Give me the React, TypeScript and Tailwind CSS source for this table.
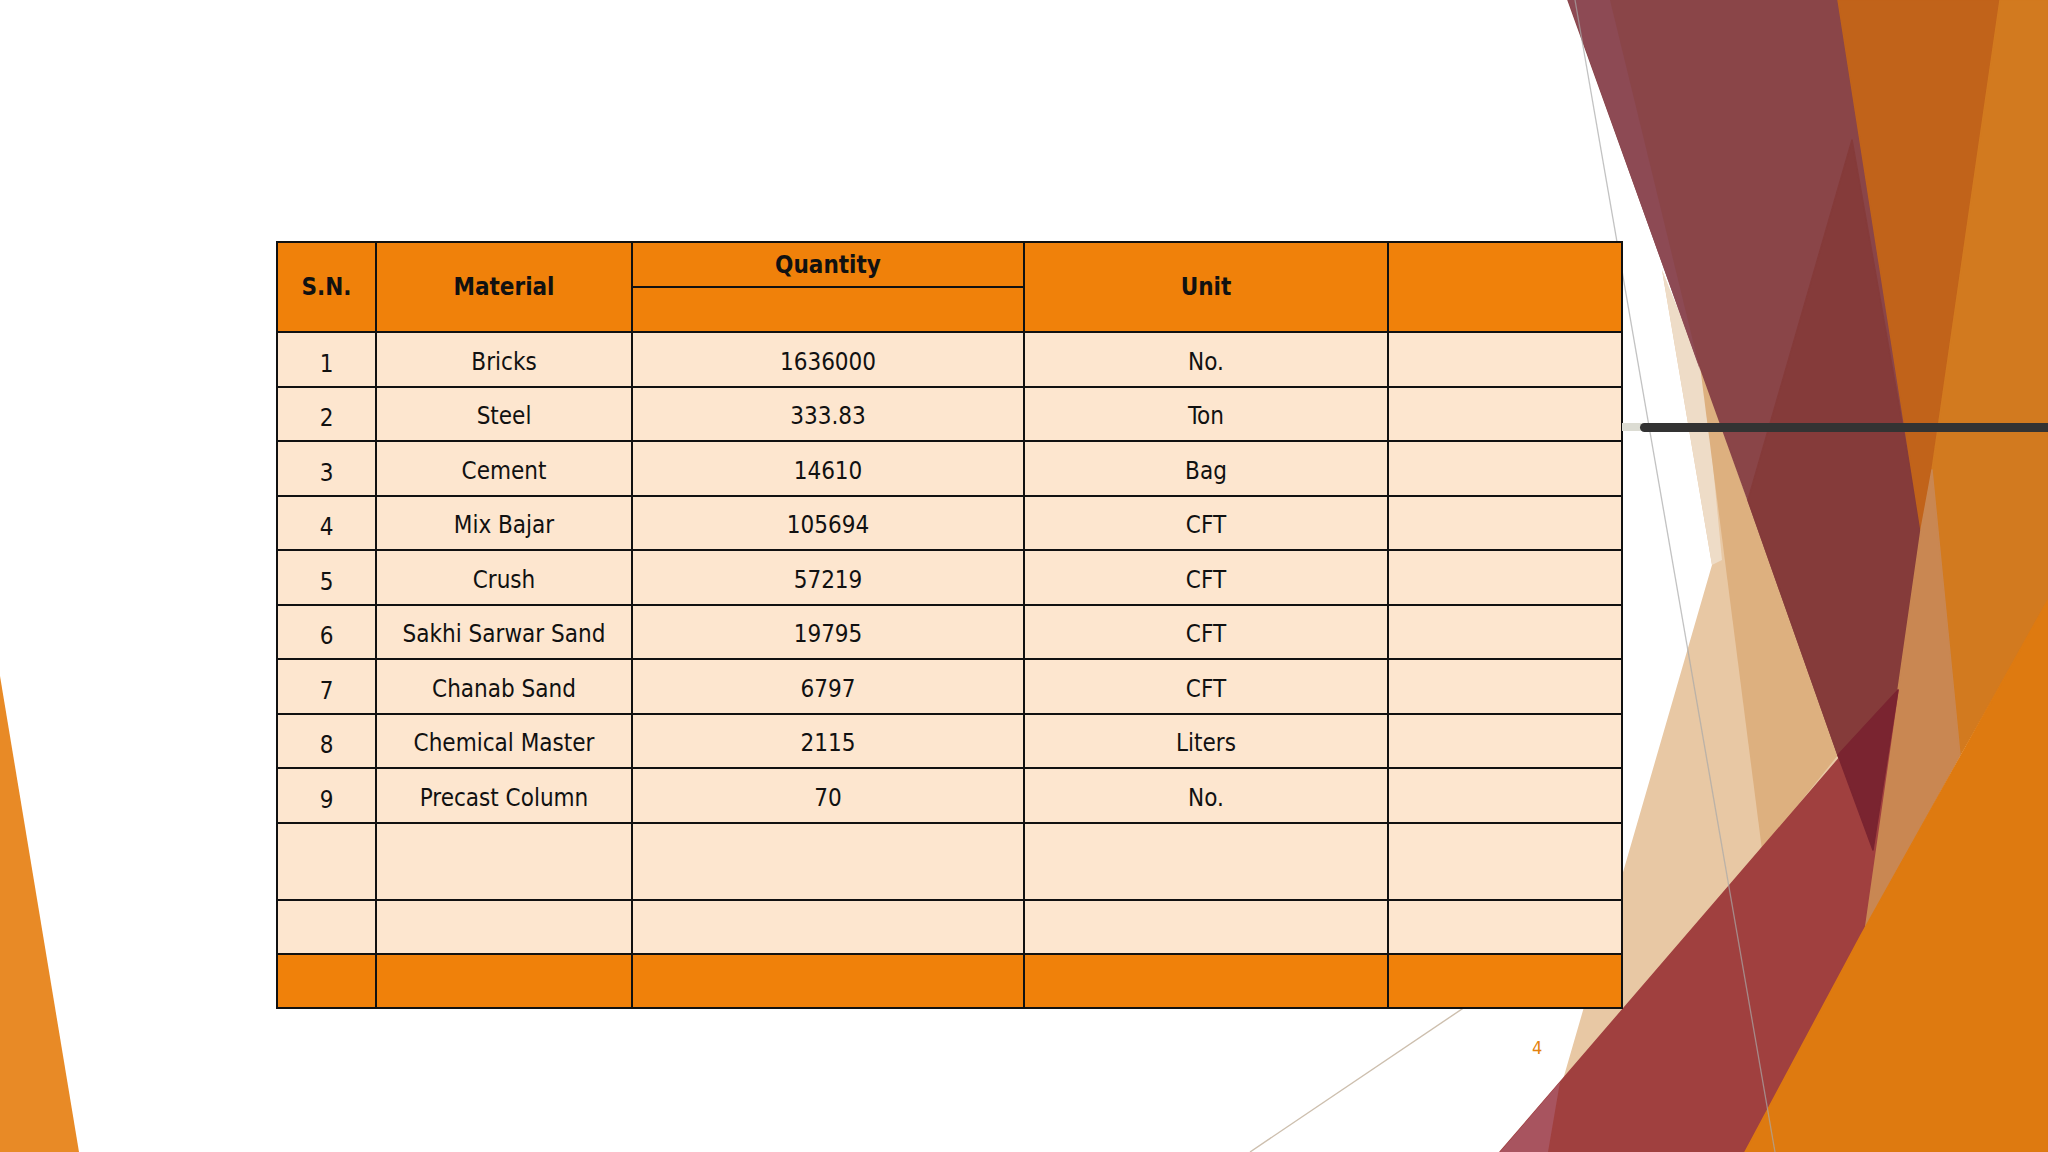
const rows = [
  ["1", "Bricks", "1636000", "No."],
  ["2", "Steel", "333.83", "Ton"],
  ["3", "Cement", "14610", "Bag"],
  ["4", "Mix Bajar", "105694", "CFT"],
  ["5", "Crush", "57219", "CFT"],
  ["6", "Sakhi Sarwar Sand", "19795", "CFT"],
  ["7", "Chanab Sand", "6797", "CFT"],
  ["8", "Chemical Master", "2115", "Liters"],
  ["9", "Precast Column", "70", "No."],
];

// filled shard, stroked with its own colour so neighbours don't leave seams
function Shard({ points, fill }: { points: string; fill: string }) {
  return <polygon points={points} fill={fill} stroke={fill} strokeWidth="1.5" strokeLinejoin="round" />;
}

function Shards() {
  return (
    <svg className="absolute inset-0" width="2048" height="1152" viewBox="0 0 2048 1152">
      {/* left corner */}
      <polygon points="0,676 79,1152 0,1152" fill="#e88a26" />
      {/* thin line behind table */}
      <line x1="1250" y1="1152" x2="1840" y2="754" stroke="#cdbfae" strokeWidth="1.4" />
      {/* tan */}
      <polygon points="1662,270 1838,755 1863,935 1745,1152 1542,1152 1712,565" fill="#e8c8a4" />
      <polygon points="1662,270 1704,372 1722,560 1712,565" fill="#eedcc7" />
      <polygon points="1700,366 1838,755 1762,850" fill="#ddb07f" />
      {/* maroon */}
      <Shard points="1568,0 1838,0 1921,530 1898,690 1873,850 1838,755 1748,500" fill="#8a4548" />
      <polygon points="1568,0 1610,0 1700,370" fill="#8d4a54" />
      <Shard points="1852,140 1921,530 1898,690 1873,850 1838,755 1748,500" fill="#853b3a" />
      {/* oranges top */}
      <Shard points="1838,0 2000,0 1930,480 1921,530" fill="#c1631a" />
      <Shard points="2000,0 2048,0 2048,600 1960,755 1932,470" fill="#d27a1f" />
      <Shard points="1921,530 1932,470 1960,755 1861,935 1873,850 1898,690" fill="#c98752" />
      {/* red */}
      <Shard points="1898,690 1500,1152 1760,1152 1863,935" fill="#a0403f" />
      <polygon points="1500,1152 1560,1082 1548,1152" fill="#a8545f" />
      <Shard points="1898,690 1838,755 1873,850" fill="#7a2430" />
      {/* bright orange */}
      <Shard points="2048,600 1861,935 1745,1152 2048,1152" fill="#de7a10" />
      <line x1="1575" y1="0" x2="1775" y2="1152" stroke="#a8a8a8" strokeWidth="1.3" strokeOpacity="0.7" />
    </svg>
  );
}

export default function App() {
  const cell = "border-2 border-[#111] text-center align-middle";
  return (
    <div className="relative w-[2048px] h-[1152px] overflow-hidden bg-white font-['DejaVu_Sans_Condensed','DejaVu_Sans',sans-serif] font-stretch-condensed text-[#111]">
      <Shards />

      <div className="relative pl-[276px] pt-[241px]">
        <table className="table-fixed border-collapse w-[1345px] text-[24px] leading-none">
          <colgroup>
            <col className="w-[99px]" />
            <col className="w-[256px]" />
            <col className="w-[392px]" />
            <col className="w-[364px]" />
            <col className="w-[234px]" />
          </colgroup>
          <thead className="bg-[#f0810a] font-bold">
            <tr className="h-[45px]">
              <th rowSpan={2} className={cell}>S.N.</th>
              <th rowSpan={2} className={cell}>Material</th>
              <th className={cell}>Quantity</th>
              <th rowSpan={2} className={cell}>Unit</th>
              <th rowSpan={2} className={cell}></th>
            </tr>
            <tr className="h-[45px]">
              <th className={cell}></th>
            </tr>
          </thead>
          <tbody className="bg-[#fde6cf]">
            {rows.map((r) => (
              <tr key={r[0]} className="h-[54.5px]">
                <td className={cell + " pt-[9px]"}>{r[0]}</td>
                <td className={cell + " pt-[5px]"}>{r[1]}</td>
                <td className={cell + " pt-[5px]"}>{r[2]}</td>
                <td className={cell + " pt-[5px]"}>{r[3]}</td>
                <td className={cell}></td>
              </tr>
            ))}
            <tr className="h-[77px]">
              <td className={cell}></td>
              <td className={cell}></td>
              <td className={cell}></td>
              <td className={cell}></td>
              <td className={cell}></td>
            </tr>
            <tr className="h-[54px]">
              <td className={cell}></td>
              <td className={cell}></td>
              <td className={cell}></td>
              <td className={cell}></td>
              <td className={cell}></td>
            </tr>
            <tr className="h-[54px] bg-[#f0810a]">
              <td className={cell}></td>
              <td className={cell}></td>
              <td className={cell}></td>
              <td className={cell}></td>
              <td className={cell}></td>
            </tr>
          </tbody>
        </table>
      </div>

      <div className="absolute left-[1532px] top-[1034px] text-[18px] text-[#e3820f] font-['DejaVu_Sans',sans-serif]">4</div>

      {/* player scrub bar overlay */}
      <div className="absolute left-[1622px] top-[423px] w-[24px] h-[8px] bg-[#dcdcd3]" />
      <div className="absolute left-[1640px] top-[423px] w-[420px] h-[9px] rounded-full bg-[#333333]" />
    </div>
  );
}
